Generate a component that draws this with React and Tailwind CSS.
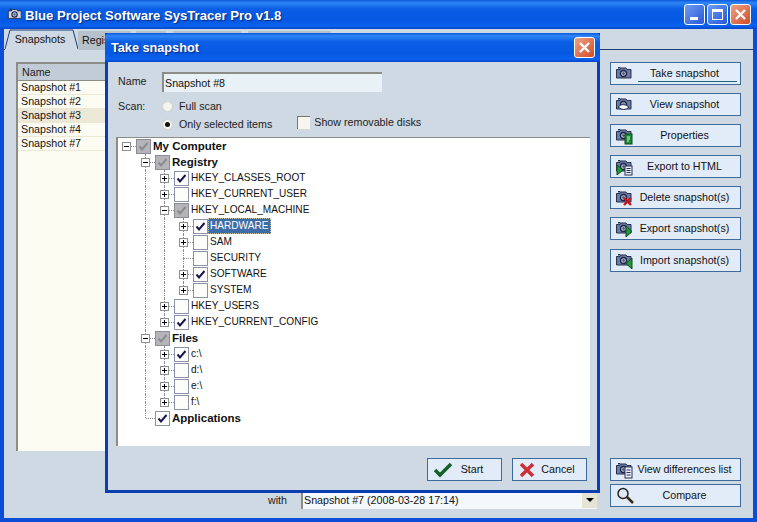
import React from "react";

const FONT = "font-['Liberation_Sans',Arial,sans-serif]";

const Camera = ({ fill = "#6d7aa8" }) => (
  <>
    <path d="M1.500 5.500h3.500l1-1.500h5l1 1.500h4v8.500H1.500z" fill={fill} stroke="#26304f" strokeWidth="1" />
    <rect x="3" y="3" width="2.500" height="1.500" fill="#26304f" />
    <circle cx="8.500" cy="9.500" r="3" fill="#b9c3dc" stroke="#1d2642" strokeWidth="1.300" />
    <circle cx="8.500" cy="9.500" r="1.200" fill="#3f4c78" />
  </>
);

const Badge = ({ type }) => {
  if (type === "view") return <path d="M3 12q5-5 11 0q-5 5-11 0z" fill="#fff" stroke="#26304f" />;
  if (type === "props") return <><rect x="10" y="8" width="7" height="10" fill="#1d8a35" stroke="#0d4a1a" /><path d="M12 11h3M12 13h3M12 15h2" stroke="#d9f2d9" /></>;
  if (type === "html") return <><path d="M2 8l6 5-6 5z" fill="#1f9a3a" stroke="#0d4a1a" /><rect x="10" y="9" width="7" height="9" fill="#eef" stroke="#26304f" /><path d="M11.500 11.500h4M11.500 13.500h4M11.500 15.500h4" stroke="#26304f" /></>;
  if (type === "delete") return <path d="M9 10l7 7M16 10l-7 7" stroke="#c4161c" strokeWidth="2.400" />;
  if (type === "export") return <path d="M11 7l6 5.500-6 5.500z" fill="#1f9a3a" stroke="#0d4a1a" />;
  if (type === "import") return <path d="M17 7l-6 5.500 6 5.500z" fill="#1f9a3a" stroke="#0d4a1a" />;
  if (type === "diff") return <><rect x="10" y="7" width="7" height="11" fill="#eef" stroke="#26304f" /><path d="M11.500 10h4M11.500 12.500h4M11.500 15h4" stroke="#26304f" /></>;
  return null;
};

const SideButton = ({ label, type, focus, mt }) => (
  <button className={`relative flex h-[23px] w-full shrink-0 items-center border border-[#3f6a9c] bg-[#e2ecf9] pl-[4px] text-[10.700px] text-[#111] ${mt || ""}`}>
    {type === "search" ? (
      <svg width="20" height="20" viewBox="0 0 20 20" className="shrink-0">
        <circle cx="8" cy="7.500" r="5" fill="#dfe9f5" stroke="#222" strokeWidth="1.500" />
        <path d="M12 11l6 6" stroke="#3a2a1a" strokeWidth="2.500" />
      </svg>
    ) : (
      <svg width="20" height="20" viewBox="0 0 20 20" className="shrink-0">
        <Camera />
        <Badge type={type} />
      </svg>
    )}
    <span className="flex-1 whitespace-nowrap pr-[6px] text-center leading-none">{label}</span>
    {focus && <span className="absolute bottom-[2px] left-[27px] right-[3px] h-px bg-[#1f6a78]" />}
  </button>
);

const Check = ({ state }) => (
  <span className={`relative z-10 flex h-[15px] w-[15px] shrink-0 items-center justify-center border ${state === "grey" ? "border-[#8c8c96] bg-[#b4b4b9]" : "border-[#8a94a6] bg-[#fdfdfb]"}`}>
    {state !== "off" && (
      <svg width="11" height="11" viewBox="0 0 11 11">
        <path d="M1.500 5.500l2.500 3 5.500-6.500" fill="none" stroke={state === "grey" ? "#8b8b8f" : "#17174f"} strokeWidth="2" />
      </svg>
    )}
  </span>
);

const treeRows = [
  { level: 0, label: "My Computer", check: "grey", bold: true, exp: "-" },
  { level: 1, label: "Registry", check: "grey", bold: true, exp: "-" },
  { level: 2, label: "HKEY_CLASSES_ROOT", check: "on", exp: "+" },
  { level: 2, label: "HKEY_CURRENT_USER", check: "off", exp: "+" },
  { level: 2, label: "HKEY_LOCAL_MACHINE", check: "grey", exp: "-" },
  { level: 3, label: "HARDWARE", check: "on", exp: "+", selected: true },
  { level: 3, label: "SAM", check: "off", exp: "+" },
  { level: 3, label: "SECURITY", check: "off" },
  { level: 3, label: "SOFTWARE", check: "on", exp: "+" },
  { level: 3, label: "SYSTEM", check: "off", exp: "+" },
  { level: 2, label: "HKEY_USERS", check: "off", exp: "+" },
  { level: 2, label: "HKEY_CURRENT_CONFIG", check: "on", exp: "+" },
  { level: 1, label: "Files", check: "grey", bold: true, exp: "-" },
  { level: 2, label: "c:\\", check: "on", exp: "+" },
  { level: 2, label: "d:\\", check: "off", exp: "+" },
  { level: 2, label: "e:\\", check: "off", exp: "+" },
  { level: 2, label: "f:\\", check: "off", exp: "+" },
  { level: 1, label: "Applications", check: "on", bold: true },
];

const hasNext = (i, level) => {
  for (let j = i + 1; j < treeRows.length; j++) {
    if (treeRows[j].level < level) return false;
    if (treeRows[j].level === level) return true;
  }
  return false;
};

// one 19px tree column, with dotted guide segments
const Cell = ({ up, down, right, exp }) => (
  <span className="relative flex h-4 w-[19px] shrink-0 items-center justify-center">
    {up && <span className="absolute left-[9px] top-0 h-[8px] border-l border-dotted border-[#8d8d8d]" />}
    {down && <span className="absolute bottom-0 left-[9px] h-[8px] border-l border-dotted border-[#8d8d8d]" />}
    {right && <span className="absolute left-[10px] top-[8px] w-[9px] border-t border-dotted border-[#8d8d8d]" />}
    {exp && (
      <span className="relative flex h-[9px] w-[9px] items-center justify-center border border-[#8f8f8f] bg-white">
        <span className="absolute h-px w-[5px] bg-black" />
        {exp === "+" && <span className="absolute h-[5px] w-px bg-black" />}
      </span>
    )}
  </span>
);

const TreeRow = ({ row, index }) => {
  const { level, label, check, bold, exp, selected } = row;
  const guides = [];
  for (let c = 1; c < level; c++) {
    // find the ancestor of this row at level c
    let a = index;
    while (treeRows[a].level !== c) a--;
    guides.push(<Cell key={c} up={hasNext(a, c)} down={hasNext(a, c)} />);
  }
  return (
    <div className="-ml-px flex h-4 items-center">
      {level > 0 && <Cell />}
      {guides}
      <Cell up={level > 0} down={hasNext(index, level)} right exp={exp} />
      <Check state={check} />
      <span className={`whitespace-nowrap px-[1px] leading-[14px] ${bold ? "text-[11.500px] font-bold" : "text-[10.100px]"} ${selected ? "border border-dotted border-[#c8c8a0] bg-[#3d6da8] text-white" : "border border-transparent text-[#111]"}`}>
        {label}
      </span>
    </div>
  );
};

const CloseButton = () => (
  <span className="flex h-[21px] w-[21px] items-center justify-center rounded-[3px] border border-white bg-gradient-to-br from-[#eda184] to-[#cf4a20]">
    <svg width="13" height="13" viewBox="0 0 13 13">
      <path d="M2 2l9 9M11 2l-9 9" stroke="#fff" strokeWidth="2.400" />
    </svg>
  </span>
);

const XpButtons = () => (
  <div className="flex items-center gap-[2px]">
    <span className="flex h-[21px] w-[21px] items-end rounded-[3px] border border-white bg-gradient-to-br from-[#6f9bf0] to-[#2a56d8] pb-[4px] pl-[5px]">
      <span className="h-[3px] w-[8px] bg-white" />
    </span>
    <span className="flex h-[21px] w-[21px] items-center justify-center rounded-[3px] border border-white bg-gradient-to-br from-[#6f9bf0] to-[#2a56d8]">
      <span className="h-[11px] w-[11px] border border-t-[3px] border-white" />
    </span>
    <CloseButton />
  </div>
);

const titleGradient = "bg-[linear-gradient(180deg,#0a58dc_0%,#2f86f5_10%,#0a5fe6_30%,#0558e2_70%,#0a62ee_90%,#0344c8_100%)]";

const sideTop = [
  { label: "Take snapshot", type: "camera", focus: true },
  { label: "View snapshot", type: "view" },
  { label: "Properties", type: "props" },
  { label: "Export to HTML", type: "html" },
  { label: "Delete snapshot(s)", type: "delete" },
  { label: "Export snapshot(s)", type: "export" },
  { label: "Import snapshot(s)", type: "import", mt: "mt-px" },
];

const snapshots = ["Snapshot #1", "Snapshot #2", "Snapshot #3", "Snapshot #4", "Snapshot #7"];

const Dialog = () => (
  <div className={`absolute left-[105px] top-[33px] flex h-[460px] w-[495px] flex-col border-[3px] border-t-0 border-[#0a3dae] bg-[#cfd9e3] ${FONT}`}>
    <div className={`-mx-[3px] flex h-[29px] shrink-0 items-center justify-between rounded-t-[4px] pl-[6px] pr-[5px] ${titleGradient}`}>
      <span className="pt-[2px] text-[12.700px] font-bold text-white [text-shadow:1px_1px_1px_#0a2a80]">Take snapshot</span>
      <CloseButton />
    </div>
    <div className="flex items-center pl-[10px] pt-[10px]">
      <span className="-mt-px w-[44px] text-[10.700px] text-[#222]">Name</span>
      <div className="flex h-[20px] w-[220px] items-center border-l-2 border-t-2 border-[#8d8d88] bg-[#e7f1f6] pl-[1px] text-[10.700px] text-[#111]">Snapshot #8</div>
    </div>
    <div className="flex pl-[10px] pt-[6px]">
      <span className="w-[44px] text-[10.700px] text-[#222]">Scan:</span>
      <div className="mt-[1px] flex flex-col gap-[4px]">
        <label className="flex h-[14px] items-center gap-[6px] text-[10.700px] text-[#222]">
          <span className="h-[11px] w-[11px] rounded-full border border-[#cfd0ca] bg-[#f4f4ee]" />
          Full scan
        </label>
        <label className="flex h-[14px] items-center gap-[6px] text-[10.700px] text-[#222]">
          <span className="flex h-[11px] w-[11px] items-center justify-center rounded-full border border-[#cfd0ca] bg-[#f4f4ee]">
            <span className="h-[5px] w-[5px] rounded-full bg-[#111]" />
          </span>
          Only selected items
        </label>
      </div>
      <label className="ml-[25px] mt-[17px] flex h-[14px] items-center gap-[4px] text-[10.700px] text-[#222]">
        <span className="h-[13px] w-[13px] border-l border-t border-[#77776f] bg-[#f6f6ee]" />
        Show removable disks
      </label>
    </div>
    <div className="ml-[8px] mt-[6px] h-[309px] w-[474px] shrink-0 border-l-2 border-t border-[#8d8d88] bg-white">
      {treeRows.map((row, i) => (
        <TreeRow key={row.label} row={row} index={i} />
      ))}
    </div>
    <div className="mt-[12px] flex justify-end gap-[10px] pr-[10px]">
      <button className="flex h-[23px] w-[75px] items-center border border-[#3f6a9c] bg-[#e2ecf9] pl-[5px] text-[10.700px] text-[#111]">
        <svg width="20" height="16" viewBox="0 0 20 16"><path d="M2 8l5 5L18 2" fill="none" stroke="#17602a" strokeWidth="3.500" /></svg>
        <span className="flex-1 pr-[10px] text-center">Start</span>
      </button>
      <button className="flex h-[23px] w-[75px] items-center border border-[#3f6a9c] bg-[#e2ecf9] pl-[6px] text-[10.700px] text-[#111]">
        <svg width="16" height="16" viewBox="0 0 16 16"><path d="M2 2l12 12M14 2L2 14" stroke="#cc2f35" strokeWidth="3.500" /></svg>
        <span className="flex-1 pr-[5px] text-center">Cancel</span>
      </button>
    </div>
  </div>
);

const App = () => (
  <div className={`relative flex h-[522px] w-[757px] flex-col overflow-hidden bg-[#0a4ed6] ${FONT}`}>
    <div className={`flex h-[29px] shrink-0 items-center justify-between pl-[7px] pr-[6px] ${titleGradient}`}>
      <div className="flex items-center gap-[2px]">
        <svg width="16" height="16" viewBox="0 0 18 18"><Camera fill="#cfd6e8" /></svg>
        <span className="pt-[3px] text-[13.100px] font-bold text-white [text-shadow:1px_1px_1px_#0a2a80]">Blue Project Software SysTracer Pro v1.8</span>
      </div>
      <XpButtons />
    </div>
    <div className="mx-[4px] mb-[4px] flex min-h-0 flex-1 flex-col bg-[#cfd9e3]">
      <div className="flex h-[21px] shrink-0 items-end border-b border-[#1e3d78] pl-[1px]">
        <div className="relative z-10 -mb-px flex h-[21px] w-[73px] items-center justify-center bg-[#cfd9e3] pr-[3px] text-[10.700px] text-[#111]">
          <svg className="absolute inset-0" width="73" height="21" viewBox="0 0 73 21">
            <path d="M0 20L5 1H68L73 20" fill="none" stroke="#1e3d78" />
          </svg>
          Snapshots
        </div>
        <div className="-mb-px flex h-[19px] w-[53px] items-center bg-[#b6c1cc] pl-[4px] text-[10.700px] text-[#111]">Registry</div>
        <div className="-mb-px ml-[5px] h-[19px] w-[30px] bg-[#b6c1cc]" />
        <div className="-mb-px ml-[7px] h-[19px] w-[68px] bg-[#b6c1cc]" />
        <div className="-mb-px ml-[7px] h-[19px] w-[83px] bg-[#b6c1cc]" />
      </div>
      <div className="flex min-h-0 flex-1 pl-[12px] pr-[12px] pt-[12px]">
        <div className="flex w-[581px] flex-col">
          <div className="h-[389px] border-l-2 border-t-2 border-[#8d8d88] bg-[#fdfcf3]">
            <div className="flex h-[17px] items-center border-b border-[#8d8d88] bg-[#c2ccd6] pl-[4px] text-[10.700px] text-[#222]">Name</div>
            {snapshots.map((name) => (
              <div key={name} className={`flex h-[14px] items-center border-b border-[#ebe9d4] pl-[3px] text-[10.700px] text-[#111] ${name === "Snapshot #3" ? "bg-[#ece8d8]" : ""}`}>
                {name}
              </div>
            ))}
          </div>
          <div className="mt-[40px] flex items-center">
            <span className="ml-[252px] w-[33px] text-[10.700px] text-[#222]">with</span>
            <div className="flex h-[18px] flex-1 items-center justify-between border-l-2 border-[#8d8d88] bg-[#f4f8fb] pl-[1px] text-[10.700px] text-[#111]">
              Snapshot #7 (2008-03-28 17:14)
              <span className="flex h-[15px] w-[15px] items-center justify-center bg-[#e6e3d4]">
                <span className="border-x-[4px] border-t-[4px] border-x-transparent border-t-black" />
              </span>
            </div>
          </div>
        </div>
        <div className="ml-[13px] flex w-[131px] flex-col pb-[11px]">
          <div className="flex flex-col gap-[8px]">
            {sideTop.map((b) => (
              <SideButton key={b.label} {...b} />
            ))}
          </div>
          <div className="mt-auto flex flex-col gap-[3px]">
            <SideButton label="View differences list" type="diff" />
            <SideButton label="Compare" type="search" />
          </div>
        </div>
      </div>
    </div>
    <Dialog />
  </div>
);

export default App;
